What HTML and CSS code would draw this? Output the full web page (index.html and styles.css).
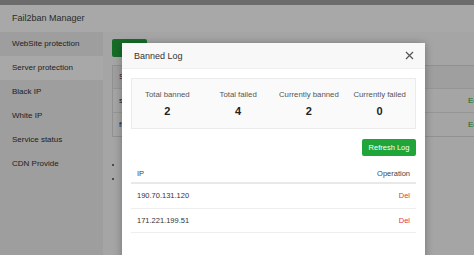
FILE: index.html
```html
<!DOCTYPE html>
<html>
<head>
<meta charset="utf-8">
<link rel="stylesheet" href="styles.css">
</head>
<body>
<div class="app">
  <div class="topbar"></div>
  <header class="title">Fail2ban Manager</header>
  <div class="main">
    <nav class="sidebar">
      <div class="nav-item">WebSite protection</div>
      <div class="nav-item active">Server protection</div>
      <div class="nav-item">Black IP</div>
      <div class="nav-item">White IP</div>
      <div class="nav-item">Service status</div>
      <div class="nav-item">CDN Provide</div>
    </nav>
    <section class="content">
      <button class="btn-add">Add</button>
      <div class="bg-table">
        <div class="bg-row bg-head"><span>Se</span><span></span></div>
        <div class="bg-row"><span>ss</span><span class="edit">Edit</span></div>
        <div class="bg-row"><span>ft</span><span class="edit">Edit</span></div>
      </div>
      <ul class="tips">
        <li>L</li>
        <li>T</li>
      </ul>
    </section>
  </div>
</div>
<div class="mask"></div>
<div class="modal">
  <div class="modal-head">
    <span class="modal-title">Banned Log</span>
    <svg class="close" width="9" height="9" viewBox="0 0 9 9"><path d="M1 1L8 8M8 1L1 8" stroke="#555" stroke-width="1.2" fill="none"/></svg>
  </div>
  <div class="modal-body">
    <div class="stats">
      <div class="stat"><div class="stat-label">Total banned</div><div class="stat-num">2</div></div>
      <div class="stat"><div class="stat-label">Total failed</div><div class="stat-num">4</div></div>
      <div class="stat"><div class="stat-label">Currently banned</div><div class="stat-num">2</div></div>
      <div class="stat"><div class="stat-label">Currently failed</div><div class="stat-num">0</div></div>
    </div>
    <div class="actions"><button class="btn-refresh">Refresh Log</button></div>
    <div class="log-table">
      <div class="log-row log-head"><span>IP</span><span>Operation</span></div>
      <div class="log-row"><span>190.70.131.120</span><span class="del">Del</span></div>
      <div class="log-row"><span>171.221.199.51</span><span class="del">Del</span></div>
    </div>
  </div>
</div>
</body>
</html>
```

FILE: styles.css
```css
* { box-sizing: border-box; }
html, body {
  margin: 0;
  padding: 0;
  width: 474px;
  height: 255px;
  overflow: hidden;
  font-family: "Liberation Sans", Arial, sans-serif;
  color: #333;
  background: #fff;
}
.app {
  width: 474px;
  height: 255px;
  display: flex;
  flex-direction: column;
  background: #fafafa;
}
.topbar {
  height: 5px;
  background: #a4a4a4;
}
.title {
  height: 27px;
  line-height: 27px;
  padding-left: 12px;
  font-size: 9px;
  color: #444;
  background: #fff;
}
.main {
  flex: 1;
  display: flex;
}
.sidebar {
  width: 103px;
  background: #f0f0f0;
  flex-shrink: 0;
}
.nav-item {
  height: 24px;
  line-height: 24px;
  padding-left: 12px;
  font-size: 8px;
  color: #333;
}
.nav-item.active {
  background: #ffffff;
}
.content {
  flex: 1;
  padding: 7px 0 0 9px;
  overflow: hidden;
}
.btn-add {
  display: block;
  width: 35px;
  height: 18px;
  border: 0;
  border-radius: 2px;
  background: #20a53a;
  color: #fff;
  font-size: 8px;
  font-family: inherit;
}
.bg-table {
  margin-top: 8px;
  width: 393px;
  border: 1px solid #ddd;
}
.bg-row {
  display: flex;
  justify-content: space-between;
  height: 24px;
  line-height: 24px;
  padding: 0 6px;
  font-size: 8px;
  border-top: 1px solid #e4e4e4;
}
.bg-head {
  height: 22px;
  line-height: 22px;
  background: #f2f2f2;
  border-top: 0;
}
.edit {
  color: #20a53a;
  width: 26px;
  margin-right: 4px;
}
.tips {
  margin: 21px 0 0 0;
  padding-left: 11px;
  font-size: 8px;
  line-height: 13.5px;
  color: #444;
}
.mask {
  position: absolute;
  inset: 0;
  background: rgba(0, 0, 0, 0.34);
}
.modal {
  position: absolute;
  left: 122px;
  top: 43px;
  width: 303px;
  height: 230px;
  background: #fff;
  box-shadow: 0 1px 8px rgba(0, 0, 0, 0.3);
}
.modal-head {
  height: 26px;
  display: flex;
  align-items: center;
  justify-content: space-between;
  padding: 0 11px 0 12px;
  background: #f8f8f8;
  border-bottom: 1px solid #eee;
}
.modal-title {
  font-size: 9px;
  color: #333;
}
.close { display: block; }
.modal-body {
  padding: 9px 9px 0 9px;
}
.stats {
  display: grid;
  grid-template-columns: repeat(4, 1fr);
  height: 51px;
  background: #fafafa;
  border: 1px solid #ebebeb;
  padding-top: 10px;
}
.stat {
  text-align: center;
}
.stat-label {
  font-size: 7.8px;
  color: #555;
  height: 11px;
  line-height: 11px;
}
.stat-num {
  margin-top: 4px;
  font-size: 11px;
  font-weight: bold;
  color: #222;
  line-height: 14px;
}
.actions {
  display: flex;
  justify-content: flex-end;
  margin-top: 10px;
}
.btn-refresh {
  width: 54px;
  height: 17px;
  border: 0;
  border-radius: 2px;
  background: #20a53a;
  color: #fff;
  font-size: 7.5px;
  font-family: inherit;
  padding: 0;
}
.log-table {
  margin-top: 8px;
}
.log-row {
  display: flex;
  justify-content: space-between;
  align-items: center;
  height: 24.5px;
  padding: 0 6px;
  font-size: 7.5px;
  color: #333;
  border-bottom: 1px solid #eee;
}
.log-head {
  height: 20px;
  color: #444;
  border-bottom: 2px solid #e8e8e8;
}
.del {
  color: #e8353a;
}
```
